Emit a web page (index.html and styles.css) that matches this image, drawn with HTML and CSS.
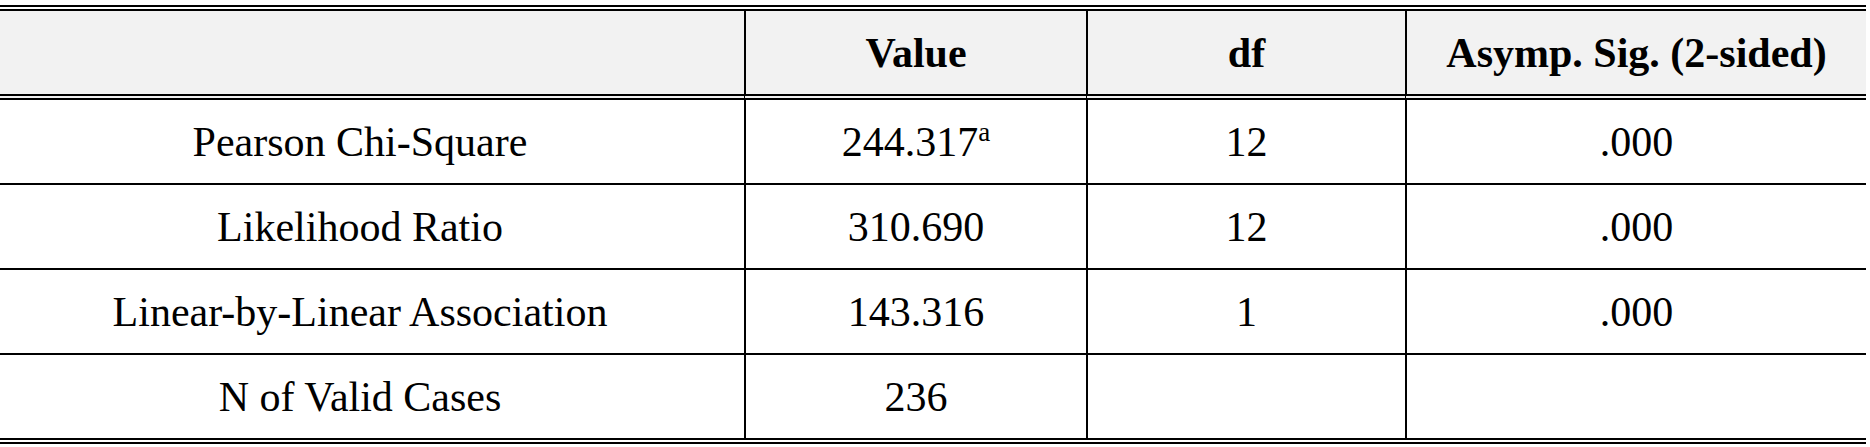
FILE: index.html
```html
<!DOCTYPE html>
<html>
<head>
<meta charset="utf-8">
<title>Chi-Square Tests</title>
<link rel="stylesheet" href="styles.css">
</head>
<body>
<table class="stats">
    <thead>
        <tr>
            <th class="c1"></th>
            <th class="c2">Value</th>
            <th class="c3">df</th>
            <th class="c4">Asymp. Sig. (2-sided)</th>
        </tr>
    </thead>
    <tbody>
        <tr>
            <td class="c1">Pearson Chi-Square</td>
            <td class="c2">244.317<sup>a</sup></td>
            <td class="c3">12</td>
            <td class="c4">.000</td>
        </tr>
        <tr>
            <td class="c1">Likelihood Ratio</td>
            <td class="c2">310.690</td>
            <td class="c3">12</td>
            <td class="c4">.000</td>
        </tr>
        <tr>
            <td class="c1">Linear-by-Linear Association</td>
            <td class="c2">143.316</td>
            <td class="c3">1</td>
            <td class="c4">.000</td>
        </tr>
        <tr class="last">
            <td class="c1">N of Valid Cases</td>
            <td class="c2">236</td>
            <td class="c3"></td>
            <td class="c4"></td>
        </tr>
    </tbody>
</table>
</body>
</html>
```

FILE: styles.css
```css
body {
    margin: 0;
    padding-top: 5px;
    background: #fff;
    font-family: "Liberation Serif", "Times New Roman", serif;
    color: #000;
}
.stats {
    width: 1866px;
    table-layout: fixed;
    border-collapse: separate;
    border-spacing: 0;
    border-top: 6px double #000;
    border-bottom: 6px double #000;
}
.stats th,
.stats td {
    box-sizing: border-box;
    height: 85px;
    padding: 0;
    font-size: 42px;
    text-align: center;
    vertical-align: middle;
    border-left: 2px solid #000;
    border-bottom: 2px solid #000;
}
.stats th {
    height: 89px;
    font-weight: bold;
    background: #f2f2f2;
    border-bottom: 6px double #000;
}
.stats tr.last td {
    height: 83px;
    border-bottom: none;
}
.stats .c1 {
    width: 744px;
    padding-right: 24px;
    border-left: none;
}
.stats .c2 {
    width: 342px;
}
.stats .c3 {
    width: 319px;
}
.stats .c4 {
    width: 461px;
}
.stats sup {
    font-size: 27px;
    line-height: 0;
    vertical-align: 15px;
}
```
